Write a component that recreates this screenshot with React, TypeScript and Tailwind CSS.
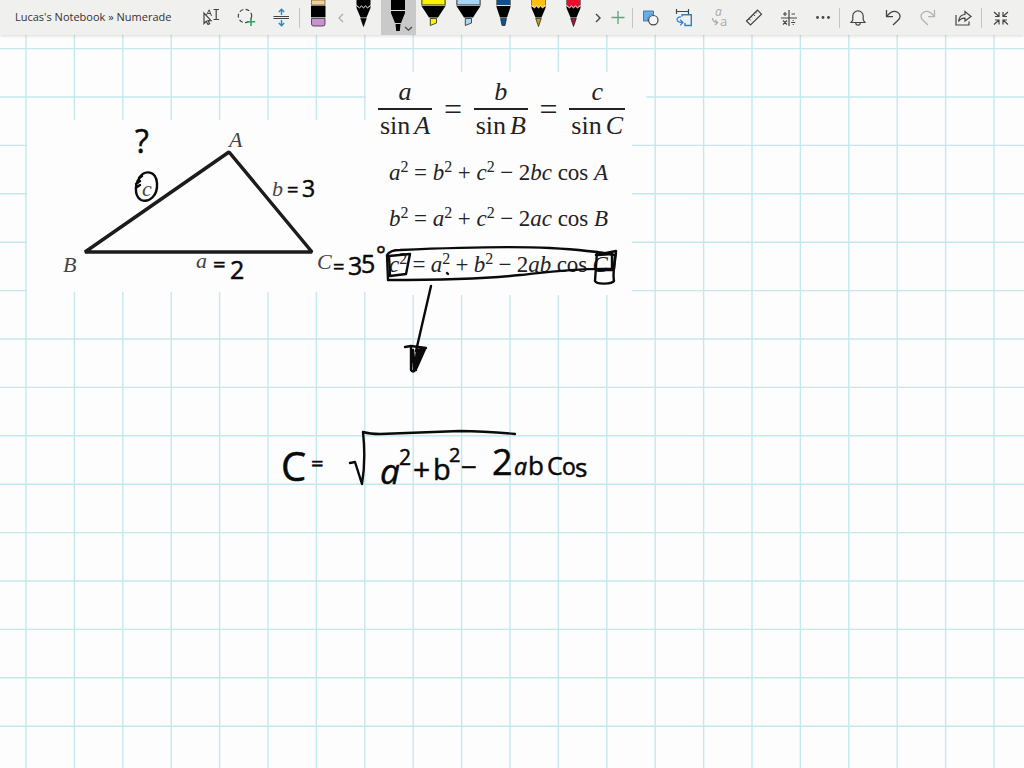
import type { ReactNode } from "react";

const GRID = 48.4;
const columns = Array.from({ length: 60 }, (_, i) => 26 + i * GRID);
const rows = Array.from({ length: 40 }, (_, i) => 13.6 + i * GRID);

function ToolButton({ label, children, className = "w-[35px]" }: { label: string; children: ReactNode; className?: string }) {
  return (
    <button type="button" aria-label={label} className={`flex h-[35px] shrink-0 items-center justify-center ${className}`}>
      {children}
    </button>
  );
}

function Icon({ children, color = "#444444" }: { children: ReactNode; color?: string }) {
  return (
    <svg width="20" height="20" viewBox="0 0 20 20" fill="none" stroke={color} strokeWidth="1.2" className="overflow-visible">
      {children}
    </svg>
  );
}

function Separator({ className = "" }: { className?: string }) {
  return <div className={`h-5 w-px shrink-0 bg-[#c4c4c4] ${className}`} />;
}

function Pencil({ body, tip }: { body: string; tip: string }) {
  return (
    <svg width="35" height="35" viewBox="0 0 35 35">
      <path d="M10.5 0H24.5V8L20.5 17.5H14.5L10.5 8Z" fill="#000" />
      <path d="M11 0H24V6L21.5 8L19.5 6L17.5 8L15.5 6L13.5 8L11 6Z" fill={body} />
      <path d="M10.5 5.5L13.5 7.8L15.5 6L17.5 7.8L19.5 6L21.5 7.8L24.5 5.5" fill="none" stroke="#fff" strokeWidth="1" />
      <path d="M14.7 18.5H20.3L17.5 26.5Z" fill={tip} stroke="#000" strokeWidth="0.6" />
    </svg>
  );
}

function Highlighter({ color }: { color: string }) {
  return (
    <svg width="35" height="35" viewBox="0 0 35 35">
      <path d="M5.5 0H29.5V6L22 17.5H13L5.5 6Z" fill="#000" />
      <path d="M6.3 0H28.7V4.5H6.3Z" fill={color} />
      <path d="M5.5 5.3H29.5" stroke="#fff" strokeWidth="0.8" />
      <path d="M14.3 18.5H20.5V23L14.3 25.5Z" fill={color} stroke="#222" strokeWidth="0.8" />
    </svg>
  );
}

function Pen({ color }: { color: string }) {
  return (
    <svg width="35" height="35" viewBox="0 0 35 35">
      <path d="M10.5 0H24.5V7L21 17.5H14L10.5 7Z" fill="#000" />
      <path d="M11 0H24V5H11Z" fill={color} />
      <path d="M10.5 5.5H24.5" stroke="#fff" strokeWidth="0.9" />
      <path d="M14.5 18.5H20.5L19 25.5H16Z" fill={color} stroke="#111" strokeWidth="0.6" />
    </svg>
  );
}

function Toolbar() {
  return (
    <header className="relative z-10 flex h-[35px] items-center bg-[#f0f0ef] shadow-[0_1px_3px_rgba(0,0,0,0.14)]">
      <div className="w-[193px] shrink-0 whitespace-nowrap pl-[15px] font-['Open_Sans',sans-serif] text-[11px] text-[#333333]">
        Lucas's Notebook » Numerade
      </div>
      <ToolButton label="Select or type">
        <Icon>
          <path d="M3 5V15.5L5.3 13.3L7 16.5L8.6 15.7L7 12.6H10Z" />
          <path d="M5.5 7L8.2 1.8L10.5 8M7 5.5H9.5" strokeWidth="1" />
          <path d="M12.5 1.5H18M15.2 1.5V11.5M12.5 11.5H18" />
        </Icon>
      </ToolButton>
      <ToolButton label="Lasso select">
        <Icon>
          <circle cx="9" cy="8" r="6.7" strokeDasharray="4 2.4" />
          <path d="M15 9.5V18M10.8 13.7H19.2" stroke="#35a05a" strokeWidth="1.6" />
        </Icon>
      </ToolButton>
      <ToolButton label="Insert space">
        <Icon>
          <path d="M2.5 8.5H18M2.5 10.5H18" strokeWidth="1" />
          <path d="M10.5 7V1.5M7.8 4L10.5 1.3L13.2 4M10.5 12V17.5M7.8 15L10.5 17.7L13.2 15" stroke="#2789c2" strokeWidth="1.4" />
        </Icon>
      </ToolButton>
      <Separator className="mx-px" />
      <ToolButton label="Eraser">
        <svg width="35" height="35" viewBox="0 0 35 35">
          <path d="M10.5 0H24V5H10.5Z" fill="#f8cf8d" stroke="#555" strokeWidth="0.7" />
          <path d="M10 5.7H24.5V17.3H10Z" fill="#000" />
          <path d="M10.5 18.5H24V24Q24 26 22 26H12.5Q10.5 26 10.5 24Z" fill="#c991cf" stroke="#333" strokeWidth="0.8" />
        </svg>
      </ToolButton>
      <ToolButton label="Previous pens" className="w-[10px]">
        <svg width="6" height="10" viewBox="0 0 6 10" fill="none" stroke="#aaa" strokeWidth="1.2"><path d="M5 1L1 5L5 9" /></svg>
      </ToolButton>
      <ToolButton label="Black pencil"><Pencil body="#000" tip="#000" /></ToolButton>
      <ToolButton label="Black pen" className="w-[35px] bg-[#c9c9c9]">
        <svg width="35" height="35" viewBox="0 0 35 35">
          <path d="M10 0H24V13L20 23H14L10 13Z" fill="#000" />
          <path d="M9.5 10.5H24.5" stroke="#ddd" strokeWidth="1" />
          <path d="M14.5 24H19.5L18.8 31H15.2Z" fill="#000" />
          <path d="M24 27L27.5 30.2L31 27" fill="none" stroke="#444" strokeWidth="1.2" />
        </svg>
      </ToolButton>
      <ToolButton label="Yellow highlighter"><Highlighter color="#fff100" /></ToolButton>
      <ToolButton label="Blue highlighter"><Highlighter color="#a5d6f8" /></ToolButton>
      <ToolButton label="Blue pen"><Pen color="#12508c" /></ToolButton>
      <ToolButton label="Yellow pencil"><Pencil body="#fdbf10" tip="#b9a51c" /></ToolButton>
      <ToolButton label="Red pencil"><Pencil body="#e80f2d" tip="#a51440" /></ToolButton>
      <ToolButton label="More pens" className="w-[13px]">
        <svg width="6" height="10" viewBox="0 0 6 10" fill="none" stroke="#444" strokeWidth="1.4"><path d="M1 1L5 5L1 9" /></svg>
      </ToolButton>
      <ToolButton label="Add pen" className="w-[27px]">
        <Icon color="#59a779"><path d="M10 3V16M3.5 9.5H16.5" strokeWidth="1.3" /></Icon>
      </ToolButton>
      <Separator className="mx-px" />
      <ToolButton label="Shapes" className="w-[33px]">
        <Icon>
          <path d="M2.5 3H12.5V6.5A5 5 0 0 0 7 13H2.5Z" fill="#6aaee6" stroke="#2878b8" strokeWidth="0.9" />
          <circle cx="12.3" cy="12.2" r="4.7" fill="#f6f6f6" />
        </Icon>
      </ToolButton>
      <ToolButton label="Ink to shape" className="w-[34px]">
        <Icon>
          <path d="M2.5 1V6M14.5 1V6M2.5 3.5H14.5" />
          <path d="M8 8.5V6.7H17.3V17.5H11V15" stroke="#2b83cc" strokeWidth="1.4" />
          <path d="M7 9C1.5 8.5 1.5 14.5 8.5 14.5M6.2 11.8L9 14.5L6.2 17.3" stroke="#2b83cc" />
        </Icon>
      </ToolButton>
      <ToolButton label="Ink to text">
        <Icon color="#aaaaaa">
          <path d="M3.5 10Q3.5 14.5 8.5 14.5M6 12L8.7 14.5L6 17" />
          <g fill="#aaaaaa" stroke="none" className="font-['Open_Sans',sans-serif]">
            <text x="6" y="8" fontSize="12" fontStyle="italic">a</text>
            <text x="11" y="18" fontSize="13">a</text>
          </g>
        </Icon>
      </ToolButton>
      <ToolButton label="Ruler">
        <Icon>
          <path d="M2.5 13L13.5 2.2L17.5 6.2L6.5 17Z" />
          <path d="M5 10.7L6.7 12.4M7.2 8.5L8.3 9.6M9.4 6.4L11.1 8.1M11.6 4.2L12.7 5.3" strokeWidth="1" />
        </Icon>
      </ToolButton>
      <ToolButton label="Math">
        <Icon>
          <path d="M10 2V18M2 10H18" />
          <path d="M6 4V8M4 6H8M12.5 6H16M4 12.5L8 16.5M8 12.5L4 16.5M12.2 14.5H16.2M14.2 11.9V13M14.2 16V17.1" strokeWidth="1.1" />
        </Icon>
      </ToolButton>
      <ToolButton label="More options" className="w-[33px]">
        <Icon><g fill="#444" stroke="none"><circle cx="4.5" cy="9.5" r="1.4" /><circle cx="10" cy="9.5" r="1.4" /><circle cx="15.5" cy="9.5" r="1.4" /></g></Icon>
      </ToolButton>
      <Separator />
      <ToolButton label="Notifications">
        <Icon>
          <path d="M3 14.5H17L15.2 12V8A5.2 5.2 0 0 0 4.8 8V12ZM7.8 15A2.2 2.2 0 0 0 12.2 15" />
        </Icon>
      </ToolButton>
      <ToolButton label="Undo">
        <Icon><path d="M3.5 2V8.7H10M3.7 8.5C7 4.2 11 2.2 14.5 4.2C18 6.5 17.6 9.8 15 12.2L10 17" strokeWidth="1.3" /></Icon>
      </ToolButton>
      <ToolButton label="Redo">
        <Icon color="#b3b3b3"><path d="M16.5 2V8.7H10M16.3 8.5C13 4.2 9 2.2 5.5 4.2C2 6.5 2.4 9.8 5 12.2L10 17" strokeWidth="1.3" /></Icon>
      </ToolButton>
      <ToolButton label="Share">
        <Icon>
          <path d="M3 7V17H16V13.5" />
          <path d="M5.5 13.5C6 9 8 6.7 12 6.5V3.5L18 8.5L12 13V10.2C9 10 7 11.2 5.5 13.5Z" />
        </Icon>
      </ToolButton>
      <Separator className="mx-px" />
      <ToolButton label="Exit full screen">
        <Icon>
          <path d="M3 4L8 8.5M4 8.5H8V4M17 4L12 8.5M16 8.5H12V4M3 16.5L8 12M4 12H8V16.5M17 16.5L12 12M16 12H12V16.5" />
        </Icon>
      </ToolButton>
    </header>
  );
}

function Fraction({ top, fn, angle }: { top: string; fn: string; angle: string }) {
  return (
    <span className="flex flex-col items-center text-[26px] leading-8">
      <i>{top}</i>
      <span className="flex gap-1 whitespace-nowrap border-t-2 border-[#222222] px-0.5">
        {fn}
        <i>{angle}</i>
      </span>
    </span>
  );
}

function Squared({ children }: { children: string }) {
  return (
    <span>
      <i>{children}</i>
      <sup className="text-[16px]">2</sup>
    </span>
  );
}

function CosineRule({ left, p, q, angle }: { left: string; p: string; q: string; angle: string }) {
  return (
    <div className="flex items-baseline justify-between whitespace-nowrap text-[23px] leading-[46px]">
      <Squared>{left}</Squared>
      <span>=</span>
      <Squared>{p}</Squared>
      <span>+</span>
      <Squared>{q}</Squared>
      <span>−</span>
      <span>2<i>{p + q}</i></span>
      <span>cos</span>
      <i>{angle}</i>
    </div>
  );
}

// handwritten characters: text, x, baseline, size
const notes: [string, number, number, number][] = [
  ["?", 135, 153, 32],
  ["=", 287, 197, 20],
  ["3", 302, 197, 23],
  ["=", 213, 272, 22],
  ["2", 230, 279, 25],
  ["=", 333, 274, 20],
  ["3", 348, 275, 25],
  ["5", 361, 273, 25],
  ["°", 376, 263, 23],
  ["C", 281, 481, 40],
  ["=", 311, 471, 22],
  ["a", 380, 484, 35],
  ["2", 399, 465, 21],
  ["+", 413, 480, 30],
  ["b", 433, 480, 29],
  ["2", 449, 462, 20],
  ["−", 461, 477, 28],
  ["2", 492, 475, 36],
  ["a", 514, 475, 23],
  ["b", 528, 475, 26],
  ["C", 547, 475, 25],
  ["o", 562, 475, 23],
  ["s", 575, 477, 26],
];

function Ink() {
  return (
    <svg className="absolute inset-0 h-full w-full">
      <g transform="translate(0 -35)" fill="none" stroke="#0a0a0a" strokeWidth="2.4" strokeLinecap="round" strokeLinejoin="round">
        <path d="M139 178C145 169 156 171 157 183C158 196 149 203 141 200C134 196 134 181 142 176M136 184L140 181M137 187L140 185" />
        <path d="M388 280L387 255Q390 250 400 250C445 248 510 246 550 248C585 250 605 253 615 255L614 269C570 268 540 273 520 275C475 280 425 280 388 280" />
        <path d="M389 256L410 254L406 274L390 276Z" />
        <path d="M597 252L595 281C597 285 612 284 614 281C612 270 616 260 616 251L596 255M598 255L612 254L612 270L597 270" />
        <path d="M447 273L448 274" />
        <path d="M431 286L416 351M405 347L411 346L426 348M411 347L411 370Q414 374 417 367L425 349L419 362L417 349L415 369L413 350M418 350L423 349L417 362M412 358L416 370M413 352L414 370L420 350L416 366L422 352" />
        <path d="M350 463L355 462L362 484Q366 460 363 432Q370 434 380 434L460 431Q485 431 515 434" />
      </g>
      <g transform="translate(0 -35)" strokeWidth="0.5" className="fill-[#0a0a0a] stroke-[#0a0a0a] font-['Open_Sans',sans-serif]">
        {notes.map(([char, x, y, size]) => (
          <text key={`${x}-${y}`} x={x} y={y} fontSize={size} className={char === "a" ? "italic" : ""}>{char}</text>
        ))}
      </g>
    </svg>
  );
}

function Triangle() {
  return (
    <figure className="absolute left-[27px] top-[85px] h-[172px] w-[350px] bg-[#fdfdfd] font-['Liberation_Serif',serif] text-[22px] italic leading-6 text-[#444444]">
      <svg className="absolute inset-0" width="350" height="172" viewBox="0 0 350 172" fill="none" stroke="#1c1c1c" strokeWidth="3.5">
        <path d="M58 132L202 32L285 132Z" strokeLinejoin="bevel" />
      </svg>
      <span className="absolute left-[202px] top-[8px]">A</span>
      <span className="absolute left-[36px] top-[133px]">B</span>
      <span className="absolute left-[290px] top-[130px]">C</span>
      <span className="absolute left-[169px] top-[129px]">a</span>
      <span className="absolute left-[245px] top-[57px]">b</span>
      <span className="absolute left-[115px] top-[57px]">c</span>
    </figure>
  );
}

export default function App() {
  return (
    <div className="flex h-screen flex-col overflow-hidden bg-[#fdfdfd]">
      <Toolbar />
      <main className="relative flex-1 overflow-hidden">
        <svg className="absolute inset-0 h-full w-full" stroke="#c5e8ee" strokeWidth="1.4">
          {columns.map((x) => <line key={x} x1={x} x2={x} y1="0" y2="100%" />)}
          {rows.map((y) => <line key={y} x1="0" x2="100%" y1={y} y2={y} />)}
        </svg>
        <Triangle />
        <div className="absolute left-[366px] top-[37px] flex h-[71px] w-[280px] items-center justify-between bg-[#fdfdfd] pl-3 pr-[21px] pt-0.5 font-['Liberation_Serif',serif] text-[#222222]">
          <Fraction top="a" fn="sin" angle="A" />
          <span className="text-[32px]">=</span>
          <Fraction top="b" fn="sin" angle="B" />
          <span className="text-[32px]">=</span>
          <Fraction top="c" fn="sin" angle="C" />
        </div>
        <div className="absolute left-[377px] top-[108px] h-[152px] w-[255px] bg-[#fdfdfd] pl-3 pr-6 pt-[7px] font-['Liberation_Serif',serif] text-[#222222]">
          <CosineRule left="a" p="b" q="c" angle="A" />
          <CosineRule left="b" p="a" q="c" angle="B" />
          <CosineRule left="c" p="a" q="b" angle="C" />
        </div>
        <Ink />
      </main>
    </div>
  );
}
